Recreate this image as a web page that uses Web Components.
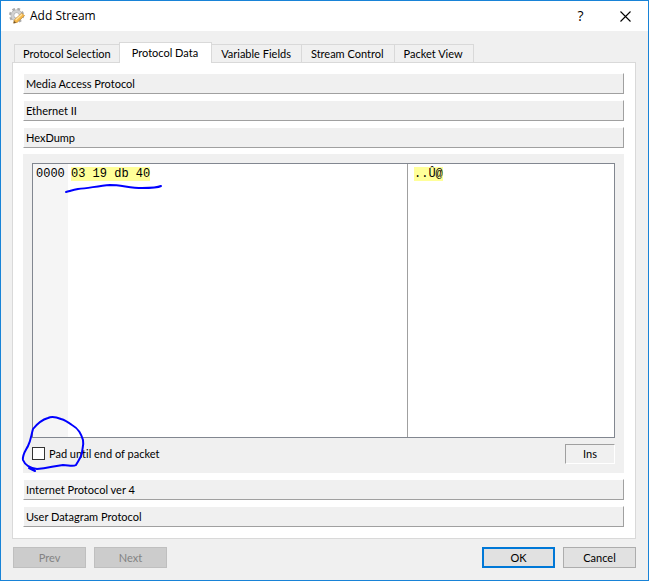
<!DOCTYPE html>
<html lang="en">
<head>
<meta charset="utf-8">
<title>Add Stream</title>
<style>
  body { margin: 0; font: 11px/14px Lato, "Noto Sans", sans-serif; font-variant-ligatures: none; color: #000; }
</style>
</head>
<body>
<stream-dialog caption="Add Stream">
  <tab-strip slot="tabs" labels="Protocol Selection|Protocol Data|Variable Fields|Stream Control|Packet View" selected="1"></tab-strip>
  <section-bar>Media Access Protocol</section-bar>
  <section-bar>Ethernet II</section-bar>
  <section-bar>HexDump</section-bar>
  <hex-panel></hex-panel>
  <section-bar>Internet Protocol ver 4</section-bar>
  <section-bar>User Datagram Protocol</section-bar>
  <push-button slot="nav" disabled>Prev</push-button>
  <push-button slot="nav" disabled>Next</push-button>
  <push-button slot="actions" primary>OK</push-button>
  <push-button slot="actions">Cancel</push-button>
</stream-dialog>

<script>
class ShadowElement extends HTMLElement {
  connectedCallback() {
    if (this.shadowRoot) return;
    this.attachShadow({ mode: "open" }).innerHTML = this.render();
  }
}

class StreamDialog extends ShadowElement {
  render() {
    return `
<style>
  :host { display: flex; flex-direction: column; box-sizing: border-box; min-height: 100vh; background: #f0f0f0; border: 1px solid #1883d7; }
  header { display: flex; align-items: center; height: 30px; padding-left: 8px; background: #fff; }
  h1 { flex: 1; margin: 0 0 0 5px; font: 12px/16px "Open Sans", "Noto Sans", sans-serif; }
  header button { display: grid; place-items: center; width: 45px; height: 30px; padding: 0; border: 0; background: none; font: 14px/16px "Open Sans", sans-serif; color: #000; }
  main { flex: 1; display: flex; flex-direction: column; padding: 11px 12px 0 11px; }
  .page { flex: 1; display: flex; flex-direction: column; gap: 6px; padding: 10px 11px 11px 10px; background: #fff; border: 1px solid #d9d9d9; }
  footer { display: flex; justify-content: space-between; padding: 8px 12px 12px; }
  footer div { display: flex; gap: 8px; }
</style>
<header>
  <svg width="16" height="16" viewBox="0 0 16 16" aria-hidden="true">
    <circle cx="7.6" cy="7.4" r="6.4" fill="none" stroke="#aaa" stroke-width="2.4" stroke-dasharray="2.6 2.43"/>
    <circle cx="7.6" cy="7.4" r="4.2" fill="none" stroke="#a8a8a8" stroke-width="3.6"/>
    <circle cx="7.6" cy="7.4" r="4.2" fill="none" stroke="#d2d2d2" stroke-width="2.6"/>
    <path d="M4.6 15 5.4 11.8 12.6 5.2 15.6 7.6 8.2 14.4Z" fill="#f5b84a" stroke="#c58a30" stroke-width=".6"/>
    <path d="M6.6 12 13 6.2" stroke="#ffe5a6" stroke-width="1.2"/>
    <path d="M4.5 15.4 5.2 13 7 14.7Z" fill="#6b5230"/>
  </svg>
  <h1>${this.getAttribute("caption")}</h1>
  <button aria-label="Help">?</button>
  <button aria-label="Close"><svg width="11" height="11" viewBox="0 0 11 11"><path d="M.5.5 10.5 10.5M10.5.5.5 10.5" stroke="#000" stroke-width="1.1"/></svg></button>
</header>
<main><slot name="tabs"></slot><div class="page"><slot></slot></div></main>
<footer><div><slot name="nav"></slot></div><div><slot name="actions"></slot></div></footer>`;
  }
}

class TabStrip extends ShadowElement {
  render() {
    const selected = Number(this.getAttribute("selected"));
    const tabs = this.getAttribute("labels").split("|").map((label, i) =>
      `<button role="tab" aria-selected="${i === selected}">${label}</button>`).join("");
    return `
<style>
  :host { display: block; position: relative; z-index: 1; margin-bottom: -1px; padding-left: 2px; }
  div { display: flex; align-items: flex-end; }
  button { box-sizing: border-box; height: 18px; margin: 0 0 1px; padding: 1px 10px 0 9px; border: 1px solid #d9d9d9; border-left-width: 0; border-bottom: 0; background: #f0f0f0; font: inherit; color: inherit; white-space: nowrap; }
  button:first-child { padding: 1px 8px 0; border-left-width: 1px; }
  button[aria-selected="true"] { height: 21px; margin: 0 0 0 -1px; padding: 0 13px 1px 12px; border-left-width: 1px; background: #fff; }
</style>
<div role="tablist">${tabs}</div>`;
  }
}

class SectionBar extends ShadowElement {
  render() {
    return `
<style>
  :host { display: block; }
  button { display: block; box-sizing: border-box; width: 100%; height: 21px; padding: 1px 2px 0; border: 1px solid; border-color: #fff #a0a0a0 #a0a0a0 #fff; background: #f0f0f0; font: inherit; color: inherit; text-align: left; }
</style>
<button><slot></slot></button>`;
  }
}

class PushButton extends ShadowElement {
  render() {
    return `
<style>
  :host { display: block; }
  button { box-sizing: border-box; width: 73px; height: 21px; padding: 0; border: 1px solid #adadad; background: #e1e1e1; font: inherit; color: inherit; }
  button:disabled { border-color: #bfbfbf; background: #ccc; color: #838383; }
  :host([primary]) button { border: 2px solid #0078d7; }
</style>
<button ${this.hasAttribute("disabled") ? "disabled" : ""}><slot></slot></button>`;
  }
}

class HexPanel extends ShadowElement {
  render() {
    return `
<style>
  :host { flex: 1; display: flex; flex-direction: column; gap: 6px; padding: 9px; background: #f0f0f0; }
  .editor { flex: 1; position: relative; display: grid; grid-template-columns: 35px 339fr 207fr; border: 1px solid #828790; background: #fff; font: 12px/14px "Liberation Mono", "Courier New", monospace; }
  .editor > div { padding: 3px; }
  .address { background: #f5f5f5; }
  .ascii { border-left: 1px solid #a0a0a0; }
  .editor > .ascii { padding-left: 6px; }
  mark { display: inline-block; background: #ff9; color: inherit; }
  .options { position: relative; display: flex; align-items: center; justify-content: space-between; }
  label { display: flex; align-items: flex-start; gap: 4px; }
  input { appearance: none; box-sizing: border-box; width: 13px; height: 13px; margin: 0; border: 1px solid #333; background: #fff; }
  button { box-sizing: border-box; width: 50px; height: 20px; padding: 0; border: 1px solid; border-color: #a0a0a0 #fff #fff #a0a0a0; background: #f0f0f0; font: inherit; color: inherit; }
  .ink { position: absolute; fill: none; stroke: #00f; stroke-width: 2; stroke-linecap: round; stroke-linejoin: round; pointer-events: none; }
  .underline { left: 28px; top: 16px; }
  .circle { left: -16px; top: -34px; }
</style>
<div class="editor">
  <div class="address">0000</div>
  <div><mark>03 19 db 40</mark></div>
  <div class="ascii"><mark>..Û@</mark></div>
  <svg class="ink underline" width="110" height="20" viewBox="61 180 110 20" aria-hidden="true"><path d="M66 192C70 191 73 190 78 189C89 188 98 186 110 185C121 185 130 188 142 188C150 188 157 188 161 186"/></svg>
</div>
<div class="options">
  <label><input type="checkbox"> Pad until end of packet</label>
  <button>Ins</button>
  <svg class="ink circle" width="76" height="70" viewBox="16 410 76 70" aria-hidden="true"><path d="M61 419C56 417 52 416 48 418C41 420 37 424 33 429C31 436 31 440 28 446C26 450 22 455 23 460C25 465 30 468 37 469C48 468 54 466 63 465C68 465 73 467 76 465C78 461 81 458 82 453C82 449 84 445 83 440C81 434 79 429 72 425C68 422 65 420 61 419M29 468L35 471"/></svg>
</div>`;
  }
}

customElements.define("tab-strip", TabStrip);
customElements.define("section-bar", SectionBar);
customElements.define("push-button", PushButton);
customElements.define("hex-panel", HexPanel);
customElements.define("stream-dialog", StreamDialog);
</script>
</body>
</html>
